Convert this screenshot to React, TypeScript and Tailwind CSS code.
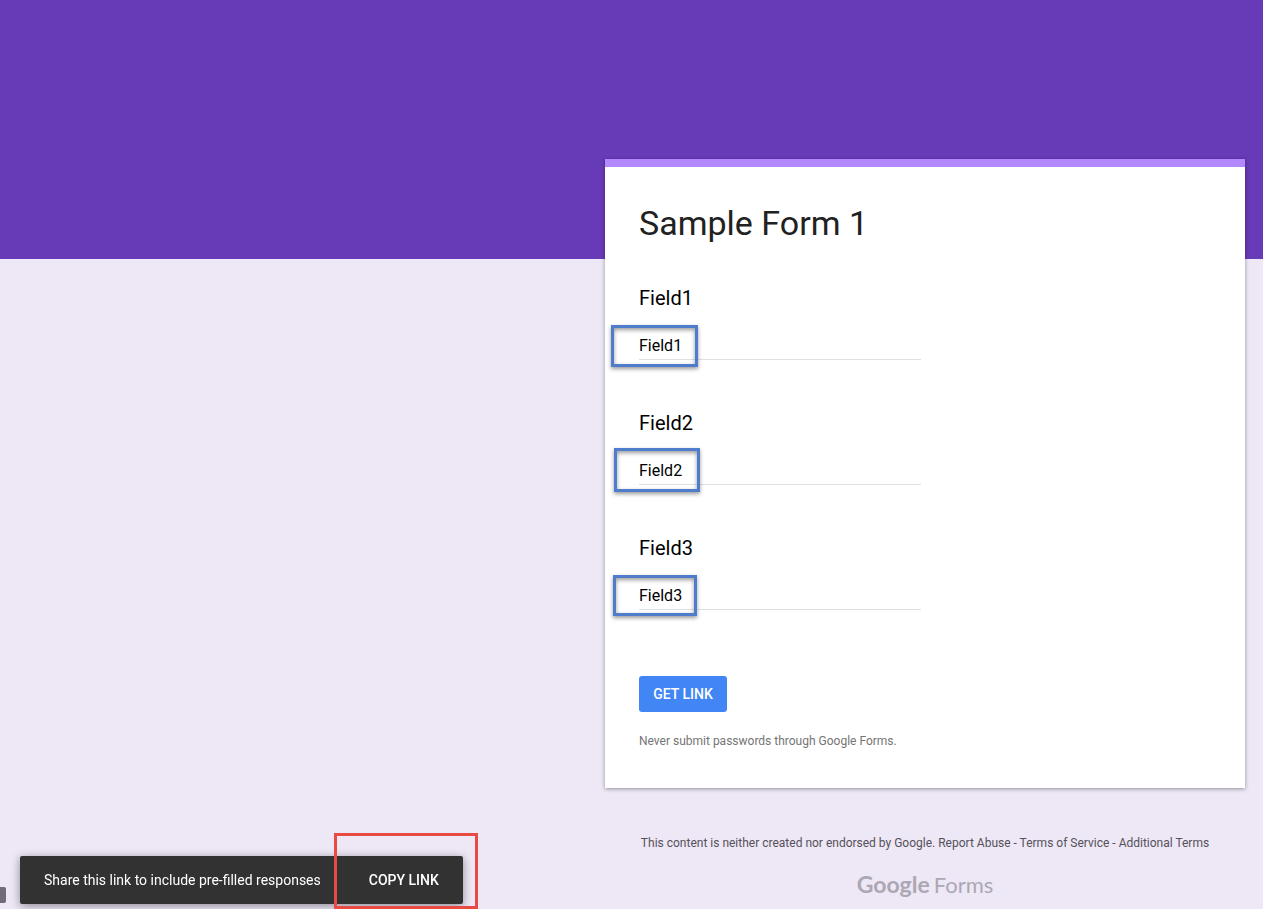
const fields = [
  { id: 'field1', label: 'Field1', mark: '-left-[28px] -top-[8px] h-[42px] w-[87px]' },
  { id: 'field2', label: 'Field2', mark: '-left-[25px] -top-[10px] h-[44px] w-[86px]' },
  { id: 'field3', label: 'Field3', mark: '-left-[26px] -top-[8px] h-[41px] w-[84px]' },
];

function Field({ id, label, mark }: { id: string; label: string; mark: string }) {
  return (
    <div>
      <label htmlFor={id} className="block text-xl leading-7 text-black">
        {label}
      </label>
      <div className="relative mt-[21px] w-[282px] max-w-full">
        <input
          id={id}
          type="text"
          defaultValue={label}
          className="block w-full border-b border-[#e0e0e0] bg-transparent pt-px pb-px text-base leading-6 text-black outline-none"
        />
        <span
          aria-hidden="true"
          className={`pointer-events-none absolute border-3 border-[#4f7dcb] shadow-[0_2px_4px_rgba(0,0,0,0.4),inset_0_2px_4px_rgba(0,0,0,0.4)] ${mark}`}
        />
      </div>
    </div>
  );
}

export default function App() {
  return (
    <div className="min-h-screen bg-[#ede7f6] font-['Roboto',sans-serif]">
      <div className="h-[259px] bg-[#673ab7]" />
      <main className="relative -mt-[100px] flex justify-end pr-[18px]">
        <div className="w-[640px] max-w-full">
          <form
            onSubmit={(e) => e.preventDefault()}
            className="border-t-8 border-[#b388ff] bg-white px-[34px] pt-[33px] pb-[39px] shadow-[0_1px_4px_rgba(0,0,0,0.37)]"
          >
            <h1 className="text-[34px] leading-[46px] text-[#212121]">Sample Form 1</h1>
            <div className="mt-[38px] flex flex-col gap-[49px]">
              {fields.map((f) => (
                <Field key={f.id} {...f} />
              ))}
            </div>
            <button
              type="submit"
              className="mt-[66px] block h-9 w-[88px] rounded-[3px] bg-[#4285f4] text-sm font-medium text-white"
            >
              GET LINK
            </button>
            <p className="mt-[21px] text-xs leading-4 text-[#757575]">
              Never submit passwords through Google Forms.
            </p>
          </form>
          <footer className="mt-[47px] text-center text-xs leading-4 text-[#555159]">
            <p>
              This content is neither created nor endorsed by Google. <a href="#abuse">Report Abuse</a> -{' '}
              <a href="#terms">Terms of Service</a> - <a href="#additional">Additional Terms</a>
            </p>
            <a
              href="#forms"
              className="mt-[17px] inline-flex items-baseline gap-1 font-['Lato',sans-serif] text-[22px] leading-8 text-[#aca7b3]"
            >
              <span className="text-[23px] font-bold">Google</span>
              <span>Forms</span>
            </a>
          </footer>
        </div>
      </main>
      <div className="fixed bottom-[6px] left-0 h-4 w-1.5 rounded-r-[2px] bg-[#706b76]" />
      <div
        role="status"
        className="fixed bottom-[5px] left-5 flex h-12 items-center gap-12 rounded-[2px] bg-[#323232] px-6 text-sm text-white shadow-[0_2px_10px_rgba(0,0,0,0.4)]"
      >
        <span>Share this link to include pre-filled responses</span>
        <button type="button" className="font-medium">
          COPY LINK
        </button>
        <span
          aria-hidden="true"
          className="pointer-events-none absolute -top-[23px] -right-[15px] -bottom-[5px] w-36 border-3 border-[#ea4a44]"
        />
      </div>
    </div>
  );
}
